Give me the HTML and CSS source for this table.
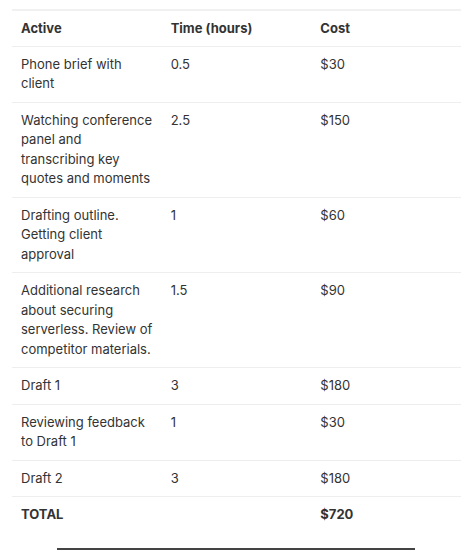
FILE: index.html
```html
<!DOCTYPE html>
<html lang="en">
<head>
<meta charset="utf-8">
<link rel="stylesheet" href="styles.css">
</head>
<body>
<main class="page">
  <table class="costs">
    <colgroup><col class="c"><col class="c"><col class="c"></colgroup>
    <thead>
      <tr><th>Active</th><th>Time (hours)</th><th>Cost</th></tr>
    </thead>
    <tbody>
      <tr><td>Phone brief with client</td><td>0.5</td><td>$30</td></tr>
      <tr><td>Watching conference panel and transcribing key quotes and moments</td><td>2.5</td><td>$150</td></tr>
      <tr><td>Drafting outline. Getting client approval</td><td>1</td><td>$60</td></tr>
      <tr><td>Additional research about securing serverless. Review of competitor materials.</td><td>1.5</td><td>$90</td></tr>
      <tr><td>Draft 1</td><td>3</td><td>$180</td></tr>
      <tr><td>Reviewing feedback to Draft 1</td><td>1</td><td>$30</td></tr>
      <tr><td>Draft 2</td><td>3</td><td>$180</td></tr>
      <tr class="total"><td>TOTAL</td><td></td><td>$720</td></tr>
    </tbody>
  </table>
  <hr class="rule">
</main>
</body>
</html>
```
FILE: styles.css
```css
html, body {
  margin: 0;
  padding: 0;
  background: #fff;
}
.page {
  padding: 9px 13px 0 12px;
  font-family: Inter, "Open Sans", sans-serif;
  color: #333;
}
.costs {
  width: 100%;
  border-collapse: collapse;
  table-layout: fixed;
  font-size: 13px;
  line-height: 19.5px;
  border-top: 2px solid #f1f1f1;
}
.costs .c { width: 33.333%; }
.costs th, .costs td {
  text-align: left;
  vertical-align: top;
  padding: 8px 9px;
  border-bottom: 1px solid #eeeeee;
}
.costs th { font-weight: 700; padding-bottom: 7px; }
.costs tr.total td { font-weight: 700; border-bottom: none; }
.rule {
  margin: 15px 46px 0 45px;
  border: 0;
  height: 2px;
  background: #444;
}
```
